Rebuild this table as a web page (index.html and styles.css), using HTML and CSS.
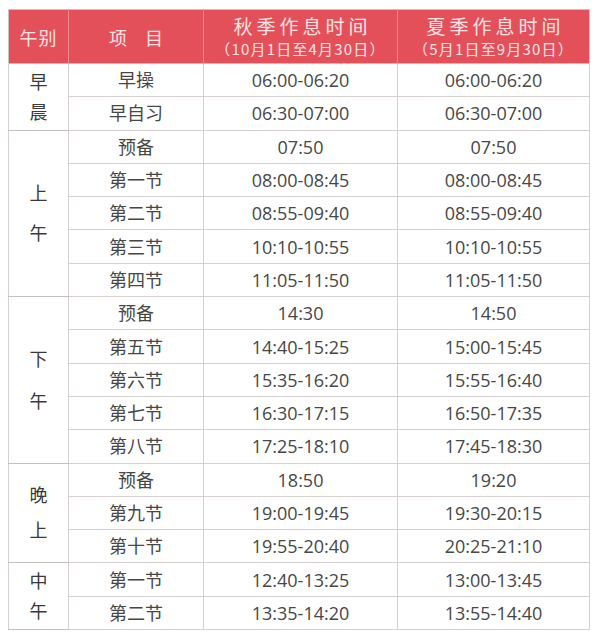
FILE: index.html
```html
<!DOCTYPE html>
<html lang="zh">
<head>
<meta charset="utf-8">
<link rel="stylesheet" href="styles.css">
</head>
<body>
<table class="sched">
  <colgroup>
    <col class="c1"><col class="c2"><col class="c3"><col class="c4">
  </colgroup>
  <thead>
    <tr>
      <th class="h1">午别</th>
      <th class="h2">项　目</th>
      <th><div class="ttl">秋季作息时间</div><div class="sub">（10月1日至4月30日）</div></th>
      <th><div class="ttl">夏季作息时间</div><div class="sub">（5月1日至9月30日）</div></th>
    </tr>
  </thead>
  <tbody>
    <tr class="gs"><td rowspan="2" class="grp g2">早<br>晨</td><td>早操</td><td>06:00-06:20</td><td>06:00-06:20</td></tr>
    <tr><td>早自习</td><td>06:30-07:00</td><td>06:30-07:00</td></tr>

    <tr class="gs"><td rowspan="5" class="grp g5">上<br>午</td><td>预备</td><td>07:50</td><td>07:50</td></tr>
    <tr><td>第一节</td><td>08:00-08:45</td><td>08:00-08:45</td></tr>
    <tr><td>第二节</td><td>08:55-09:40</td><td>08:55-09:40</td></tr>
    <tr><td>第三节</td><td>10:10-10:55</td><td>10:10-10:55</td></tr>
    <tr><td>第四节</td><td>11:05-11:50</td><td>11:05-11:50</td></tr>

    <tr class="gs"><td rowspan="5" class="grp g5b">下<br>午</td><td>预备</td><td>14:30</td><td>14:50</td></tr>
    <tr><td>第五节</td><td>14:40-15:25</td><td>15:00-15:45</td></tr>
    <tr><td>第六节</td><td>15:35-16:20</td><td>15:55-16:40</td></tr>
    <tr><td>第七节</td><td>16:30-17:15</td><td>16:50-17:35</td></tr>
    <tr><td>第八节</td><td>17:25-18:10</td><td>17:45-18:30</td></tr>

    <tr class="gs"><td rowspan="3" class="grp g3">晚<br>上</td><td>预备</td><td>18:50</td><td>19:20</td></tr>
    <tr><td>第九节</td><td>19:00-19:45</td><td>19:30-20:15</td></tr>
    <tr><td>第十节</td><td>19:55-20:40</td><td>20:25-21:10</td></tr>

    <tr class="gs"><td rowspan="2" class="grp g2">中<br>午</td><td>第一节</td><td>12:40-13:25</td><td>13:00-13:45</td></tr>
    <tr><td>第二节</td><td>13:35-14:20</td><td>13:55-14:40</td></tr>
  </tbody>
</table>
</body>
</html>
```
FILE: styles.css
```css
html, body {
  margin: 0;
  padding: 0;
  background: #ffffff;
}
body {
  padding: 9px 0 0 8px;
  font-family: "Open Sans", "Noto Sans CJK SC", sans-serif;
  color: #474747;
}
.sched {
  border-collapse: collapse;
  table-layout: fixed;
  width: 581px;
  border: 1px solid #c9c3c3;
}
.c1 { width: 60px; }
.c2 { width: 135px; }
.c3 { width: 194px; }
.c4 { width: 192px; }

.sched th {
  background: #e4505a;
  color: #fbe3e3;
  font-weight: normal;
  height: 53px;
  padding: 0;
  border-left: 1px solid #ec8a90;
  text-align: center;
  vertical-align: middle;
}
.sched th:first-child { border-left: none; }
.h1 { font-size: 18px; letter-spacing: 1px; }
.h2 { font-size: 18px; }
.ttl {
  font-size: 19px;
  letter-spacing: 4px;
  line-height: 24px;
  margin-right: -4px;
}
.sub {
  font-family: "Noto Sans CJK SC", sans-serif;
  font-size: 15px;
  line-height: 20px;
  letter-spacing: 1.2px;
}

.sched td {
  height: 32.3px;
  padding: 0;
  text-align: center;
  vertical-align: middle;
  font-size: 18px;
  line-height: 22px;
  border: 1px solid #d6d0d0;
  white-space: nowrap;
}
.sched tr.gs td { border-top: 1px solid #c4bebe; }
.sched td.grp {
  font-size: 18px;
  color: #3a3a3a;
  border-top: 1px solid #c4bebe;
  border-bottom: 1px solid #c4bebe;
}
.g2 { line-height: 30px !important; }
.g3 { line-height: 35px !important; }
.g5 { line-height: 40px !important; }
.g5b { line-height: 42px !important; }
```
